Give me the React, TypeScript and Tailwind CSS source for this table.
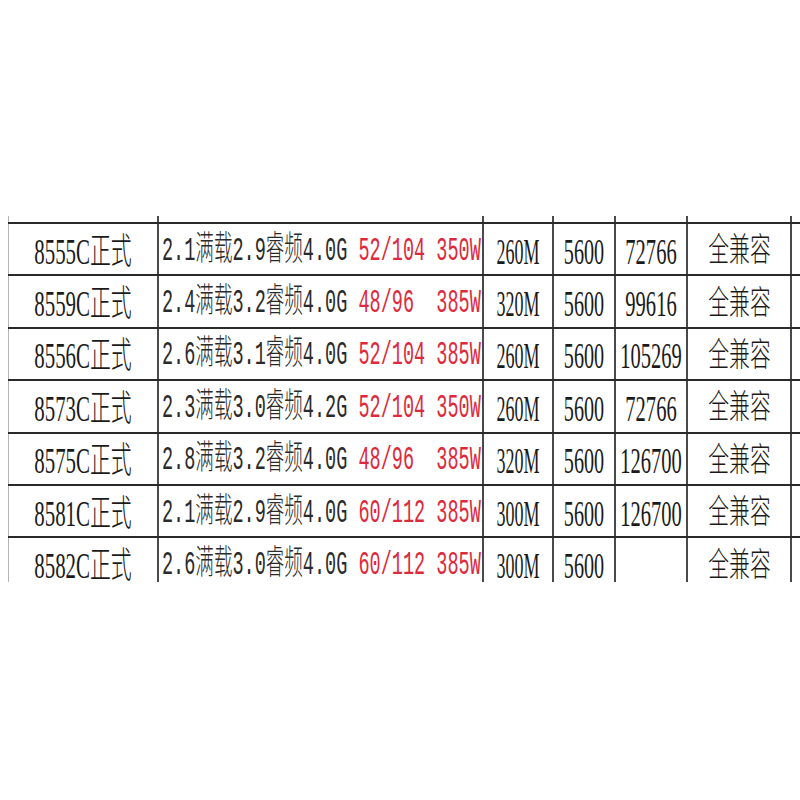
import React from "react";

const rows = [
  { model: "8555C正式", spec: "2.1满载2.9睿频4.0G", core: " 52/104 350W", cache: "260M", mem: "5600", price: "72766" },
  { model: "8559C正式", spec: "2.4满载3.2睿频4.0G", core: " 48/96  385W", cache: "320M", mem: "5600", price: "99616" },
  { model: "8556C正式", spec: "2.6满载3.1睿频4.0G", core: " 52/104 385W", cache: "260M", mem: "5600", price: "105269" },
  { model: "8573C正式", spec: "2.3满载3.0睿频4.2G", core: " 52/104 350W", cache: "260M", mem: "5600", price: "72766" },
  { model: "8575C正式", spec: "2.8满载3.2睿频4.0G", core: " 48/96  385W", cache: "320M", mem: "5600", price: "126700" },
  { model: "8581C正式", spec: "2.1满载2.9睿频4.0G", core: " 60/112 385W", cache: "300M", mem: "5600", price: "126700" },
  { model: "8582C正式", spec: "2.6满载3.0睿频4.0G", core: " 60/112 385W", cache: "300M", mem: "5600", price: "" },
];

const serif = { fontFamily: '"Liberation Serif", "Noto Sans CJK SC", serif' };
const mono = { fontFamily: '"Liberation Mono", "Noto Sans CJK SC", monospace' };

const App = () => {
  return (
    <div className="w-[800px] h-[800px] bg-white overflow-hidden text-[#1a1a1a]">
      <div className="pt-[216px] pl-[8px]">
        <div className="h-[366px] overflow-hidden">
          {/* little stubs of the vertical lines above the top rule */}
          <div className="grid grid-cols-[149px_325px_70px_62px_72px_106px] h-[6px]">
            <div className="border-l border-[#b5b5b5]" />
            <div className="border-l-2 border-[#4a4a4a]" />
            <div className="border-l-2 border-[#4a4a4a]" />
            <div className="border-l-2 border-[#4a4a4a]" />
            <div className="border-l-2 border-[#4a4a4a]" />
            <div className="border-l-2 border-r-2 border-[#4a4a4a]" />
          </div>
          {rows.map((r) => (
            <div
              key={r.model}
              className="grid grid-cols-[149px_325px_70px_62px_72px_106px] h-[52.4px] border-t-2 border-[#2a2a2a]"
            >
              <div className="border-l border-[#b5b5b5] flex items-center justify-center pt-[5px]">
                <span style={serif} className="inline-block whitespace-pre font-light text-[36px] leading-none scale-x-[0.58]">
                  {r.model}
                </span>
              </div>
              <div className="border-l-2 border-[#4a4a4a] flex items-center pl-[3px] pt-[3px]">
                <span style={mono} className="inline-block shrink-0 whitespace-pre font-light text-[34px] leading-none origin-left scale-x-[0.545] text-[#2a2a2a]">
                  {r.spec}
                  <span className="text-[#dc2a3c]">{r.core}</span>
                </span>
              </div>
              <div className="border-l-2 border-[#4a4a4a] flex items-center justify-center pt-[5px]">
                <span style={serif} className="inline-block whitespace-pre text-[36px] leading-none scale-x-[0.5]">
                  {r.cache}
                </span>
              </div>
              <div className="border-l-2 border-[#4a4a4a] flex items-center justify-center pt-[5px]">
                <span style={serif} className="inline-block whitespace-pre text-[36px] leading-none scale-x-[0.56]">
                  {r.mem}
                </span>
              </div>
              <div className="border-l-2 border-[#4a4a4a] flex items-center justify-center pt-[5px]">
                <span style={serif} className="inline-block whitespace-pre text-[36px] leading-none scale-x-[0.57]">
                  {r.price}
                </span>
              </div>
              <div className="border-l-2 border-r-2 border-[#4a4a4a] flex items-center justify-center pt-[3px]">
                <span style={serif} className="inline-block whitespace-pre font-light text-[33px] leading-none scale-x-[0.63]">
                  全兼容
                </span>
              </div>
            </div>
          ))}
        </div>
      </div>
    </div>
  );
};

export default App;
